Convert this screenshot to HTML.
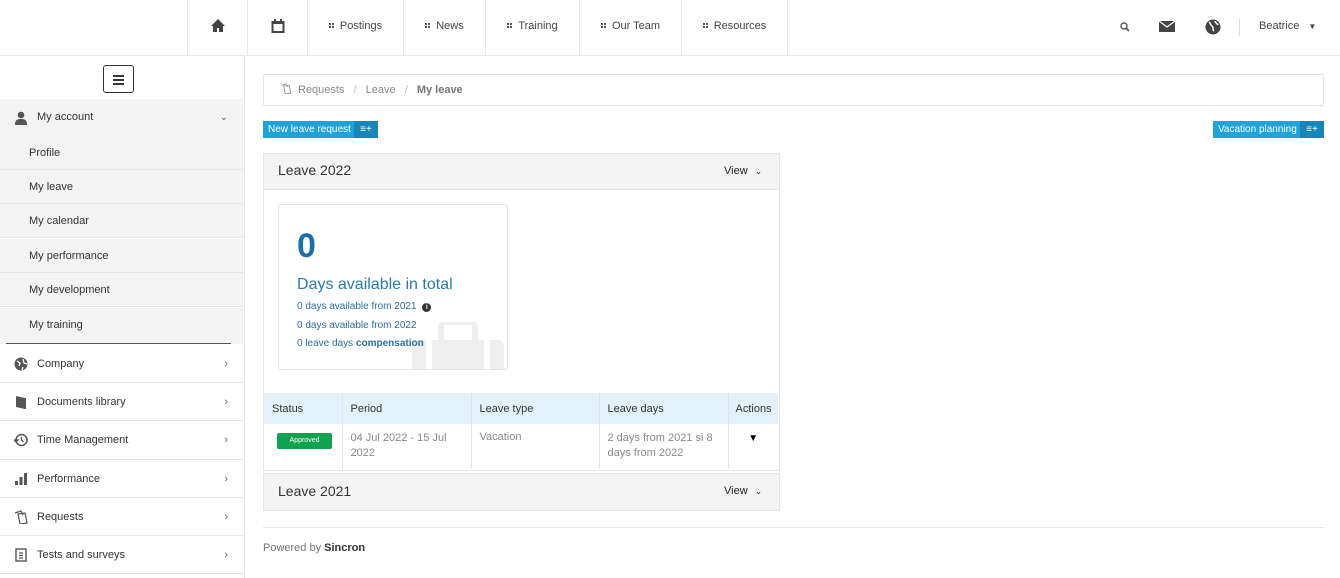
<!DOCTYPE html>
<html><head><style>
*{box-sizing:border-box;margin:0;padding:0}
body{width:1340px;height:578px;overflow:hidden;background:#fff;font-family:"Liberation Sans",sans-serif;font-size:11px;color:#333;position:relative}
.abs{position:absolute}
.top{left:0;top:0;width:1340px;height:56px;border-bottom:1px solid #e6e6e6}
.nav{top:0;height:55px;border-left:1px solid #e8e8e8;display:flex;align-items:center;justify-content:center;color:#444;font-size:11px;padding-bottom:4px}
.dots{display:inline-block;width:5px;height:5px;margin-right:6px;position:relative}
.dots:before{content:"";position:absolute;left:0;top:0;width:2px;height:2px;background:#555;box-shadow:3px 0 #555,0 3px #555,3px 3px #555}
.side{left:0;top:56px;width:245px;height:522px;border-right:1px solid #e6e6e6}
.sub{position:absolute;left:0;width:244px;height:34px;background:#f3f3f3;border-bottom:1px solid #e6e6e6;padding-left:29px;line-height:34px;color:#333}
.mi{position:absolute;left:0;width:244px;height:38px;border-bottom:1px solid #e6e6e6;padding-left:37px;line-height:38px;color:#333}
.ar{position:absolute;right:16px;top:0;color:#666;font-size:11px}
.ic{position:absolute;left:14px;top:12px;width:14px;height:14px}
.btn{height:17px;background:#1fa3d8;color:#fff;font-size:10px;line-height:17px;padding-left:5px}
.btn span{position:absolute;right:0;top:0;width:24px;height:17px;background:#1785b8;text-align:center}
th,td{text-align:left;font-weight:normal}
</style></head><body>
<div class="abs top"></div>
<div class="abs nav" style="left:187px;width:60px"><svg width="14" height="13" viewBox="0 0 14 13"><path d="M7 0L0 7h2v6h4V9h2v4h4V7h2z" fill="#444"/></svg></div>
<div class="abs nav" style="left:247px;width:60px"><svg width="14" height="14" viewBox="0 0 14 14"><rect x="1.5" y="3" width="11" height="10" fill="none" stroke="#444" stroke-width="2"/><rect x="1" y="2" width="12" height="3" fill="#444"/><rect x="3" y="0" width="2" height="3" fill="#444"/><rect x="9" y="0" width="2" height="3" fill="#444"/></svg></div>
<div class="abs nav" style="left:307px;width:96px"><i class="dots"></i>Postings</div>
<div class="abs nav" style="left:403px;width:82px"><i class="dots"></i>News</div>
<div class="abs nav" style="left:485px;width:94px"><i class="dots"></i>Training</div>
<div class="abs nav" style="left:579px;width:102px"><i class="dots"></i>Our Team</div>
<div class="abs nav" style="left:681px;width:107px;border-right:1px solid #e8e8e8"><i class="dots"></i>Resources</div>
<svg class="abs" style="left:1120px;top:22px" width="10" height="10" viewBox="0 0 10 10"><circle cx="4" cy="4" r="3" fill="none" stroke="#555" stroke-width="1.4"/><path d="M6 6l3 3" stroke="#555" stroke-width="1.6"/></svg>
<svg class="abs" style="left:1159px;top:21px" width="16" height="11" viewBox="0 0 16 11"><rect width="16" height="11" fill="#444"/><path d="M0 0l8 6 8-6" stroke="#fff" stroke-width="1.2" fill="none"/></svg>
<svg class="abs" style="left:1205px;top:19px" width="16" height="16" viewBox="0 0 16 16"><circle cx="8" cy="8" r="7.5" fill="#444"/><path d="M4 3c2 1 1 3 3 4s0 4 2 5M10 2c0 2 2 2 3 4" stroke="#fff" stroke-width="1.5" fill="none"/></svg>
<div class="abs" style="left:1239px;top:18px;width:1px;height:18px;background:#ddd"></div>
<div class="abs" style="left:1259px;top:20px;color:#444">Beatrice <span style="font-size:8px;margin-left:6px">▼</span></div>

<div class="abs side">
 <div class="abs" style="left:103px;top:9px;width:31px;height:28px;border:1px solid #333;border-radius:3px"><div style="position:absolute;left:9px;top:9px;width:11px;height:2px;background:#333;box-shadow:0 4px #333,0 8px #333"></div></div>
 <div class="mi" style="top:43px;background:#f3f3f3;line-height:37px"><svg class="ic" viewBox="0 0 14 14"><circle cx="7" cy="4" r="3.3" fill="#555"/><path d="M1 14c0-5 2-6 6-6s6 1 6 6z" fill="#555"/></svg>My account<span class="ar" style="font-size:10px">&#8964;</span></div>
 <div class="sub" style="top:80px">Profile</div>
 <div class="sub" style="top:114px">My leave</div>
 <div class="sub" style="top:148px">My calendar</div>
 <div class="sub" style="top:183px">My performance</div>
 <div class="sub" style="top:217px">My development</div>
 <div class="sub" style="top:252px;height:36px;border-bottom:none">My training</div>
 <div class="abs" style="left:6px;top:287px;width:225px;height:1px;background:#555"></div>
 <div class="mi" style="top:289px"><svg class="ic" viewBox="0 0 14 14"><circle cx="7" cy="7" r="6.5" fill="#555"/><path d="M3 4l3 2-1 3M9 2l1 4 3 1M8 13l1-3" stroke="#fff" stroke-width="1.3" fill="none"/></svg>Company<span class="ar">›</span></div>
 <div class="mi" style="top:327px"><svg class="ic" viewBox="0 0 14 14"><path d="M2 1l9 2v11l-9-2z" fill="#555"/><path d="M11 3h1v11h-1" fill="#555"/></svg>Documents library<span class="ar">›</span></div>
 <div class="mi" style="top:365px;height:39px;line-height:39px"><svg class="ic" viewBox="0 0 14 14"><circle cx="7.5" cy="7" r="5.5" fill="none" stroke="#555" stroke-width="1.5"/><path d="M7.5 4v3l2 2M0 7h4L2 9z" stroke="#555" stroke-width="1.3" fill="none"/></svg>Time Management<span class="ar">›</span></div>
 <div class="mi" style="top:404px"><svg class="ic" viewBox="0 0 14 14"><rect x="1" y="9" width="3" height="4" fill="#555"/><rect x="5.5" y="5" width="3" height="8" fill="#555"/><rect x="10" y="1" width="3" height="12" fill="#555"/></svg>Performance<span class="ar">›</span></div>
 <div class="mi" style="top:442px"><svg class="ic" viewBox="0 0 14 14"><path d="M1 3l6-2 2 4M4 4l7-1 2 10-7 1z" stroke="#555" stroke-width="1.2" fill="none"/></svg>Requests<span class="ar">›</span></div>
 <div class="mi" style="top:480px"><svg class="ic" viewBox="0 0 14 14"><rect x="2" y="1" width="10" height="12" fill="none" stroke="#555" stroke-width="1.4"/><path d="M5 5h4M5 7.5h4M5 10h4" stroke="#555" stroke-width="1.2"/></svg>Tests and surveys<span class="ar">›</span></div>
</div>

<div class="abs" style="left:263px;top:74px;width:1061px;height:32px;border:1px solid #e3e3e3;border-radius:2px;line-height:30px;padding-left:16px;color:#888;font-size:11px">
 <svg width="12" height="11" viewBox="0 0 14 14" style="vertical-align:-1px;margin-right:6px"><path d="M1 3l6-2 2 4M4 4l7-1 2 10-7 1z" stroke="#999" stroke-width="1.2" fill="none"/></svg>Requests <span style="color:#bbb;margin:0 6px">/</span> Leave <span style="color:#bbb;margin:0 6px">/</span> <b style="color:#777;font-weight:bold">My leave</b></div>
<div class="abs btn" style="left:263px;top:121px;width:115px">New leave request<span>≡+</span></div>
<div class="abs btn" style="left:1213px;top:121px;width:111px">Vacation planning<span>≡+</span></div>

<div class="abs" style="left:263px;top:153px;width:517px;height:318px;border:1px solid #e6e6e6"></div>
<div class="abs" style="left:264px;top:154px;width:515px;height:36px;background:#f4f4f5;border-bottom:1px solid #e6e6e6"></div>
<div class="abs" style="left:278px;top:162px;font-size:14px;color:#333">Leave 2022</div>
<div class="abs" style="left:724px;top:165px;font-size:11px;color:#222">View <span style="margin-left:4px;font-size:9px">&#8964;</span></div>

<div class="abs" style="left:278px;top:204px;width:230px;height:166px;border:1px solid #e3e3e3;border-radius:4px;overflow:hidden">
 <svg class="abs" style="left:133px;top:117px" width="92" height="50" viewBox="0 0 92 50"><rect x="0" y="18" width="92" height="40" rx="6" fill="#eee"/><rect x="29" y="0" width="34" height="22" rx="5" fill="none" stroke="#eee" stroke-width="6"/><rect x="14" y="18" width="6" height="40" fill="#fff"/><rect x="72" y="18" width="6" height="40" fill="#fff"/></svg>
 <div class="abs" style="left:18px;top:22px;font-size:34px;font-weight:bold;color:#1a6fa8">0</div>
 <div class="abs" style="left:18px;top:71px;font-size:16px;color:#2a7ab0">Days available in total</div>
 <div class="abs" style="left:18px;top:96px;font-size:10px;color:#2a6fa0">0 days available from 2021 <span style="display:inline-block;width:9px;height:9px;border-radius:50%;background:#333;color:#fff;font-size:7px;text-align:center;line-height:9px;font-weight:bold;margin-left:3px">i</span></div>
 <div class="abs" style="left:18px;top:115px;font-size:10px;color:#2a6fa0">0 days available from 2022</div>
 <div class="abs" style="left:18px;top:133px;font-size:10px;color:#2a6fa0">0 leave days <b>compensation</b></div>
</div>

<table class="abs" style="left:264px;top:393px;width:514px;border-collapse:collapse;font-size:11px">
<tr style="background:#e3f1fb;height:31px;color:#333"><th style="width:78px;padding-left:8px">Status</th><th style="width:129px;padding-left:8px;border-left:1px solid #e3e3e3">Period</th><th style="width:128px;padding-left:8px;border-left:1px solid #e3e3e3">Leave type</th><th style="width:129px;padding-left:8px;border-left:1px solid #e3e3e3">Leave days</th><th style="padding-left:7px;border-left:1px solid #e3e3e3">Actions</th></tr>
<tr style="height:45px;color:#888;vertical-align:top"><td style="padding:9px 0 0 13px"><span style="display:inline-block;width:55px;height:16px;background:#12a150;border-radius:2px;color:#fff;font-size:7px;line-height:16px;text-align:center">Approved</span></td><td style="padding:7px 8px 0;border-left:1px solid #e3e3e3;line-height:15px">04 Jul 2022 - 15 Jul 2022</td><td style="padding:7px 8px 0;border-left:1px solid #e3e3e3">Vacation</td><td style="padding:7px 8px 0;border-left:1px solid #e3e3e3;line-height:15px">2 days from 2021 si 8 days from 2022</td><td style="padding-top:9px;text-align:center;border-left:1px solid #e3e3e3;color:#000;font-size:10px">▼</td></tr>
</table>

<div class="abs" style="left:263px;top:473px;width:517px;height:38px;background:#f4f4f5;border:1px solid #e6e6e6"></div>
<div class="abs" style="left:278px;top:483px;font-size:14px;color:#333">Leave 2021</div>
<div class="abs" style="left:724px;top:485px;font-size:11px;color:#222">View <span style="margin-left:4px;font-size:9px">&#8964;</span></div>

<div class="abs" style="left:263px;top:527px;width:1061px;height:1px;background:#e6e6e6"></div>
<div class="abs" style="left:263px;top:542px;font-size:11px;color:#777">Powered by <b style="color:#333">Sincron</b></div>
</body></html>
